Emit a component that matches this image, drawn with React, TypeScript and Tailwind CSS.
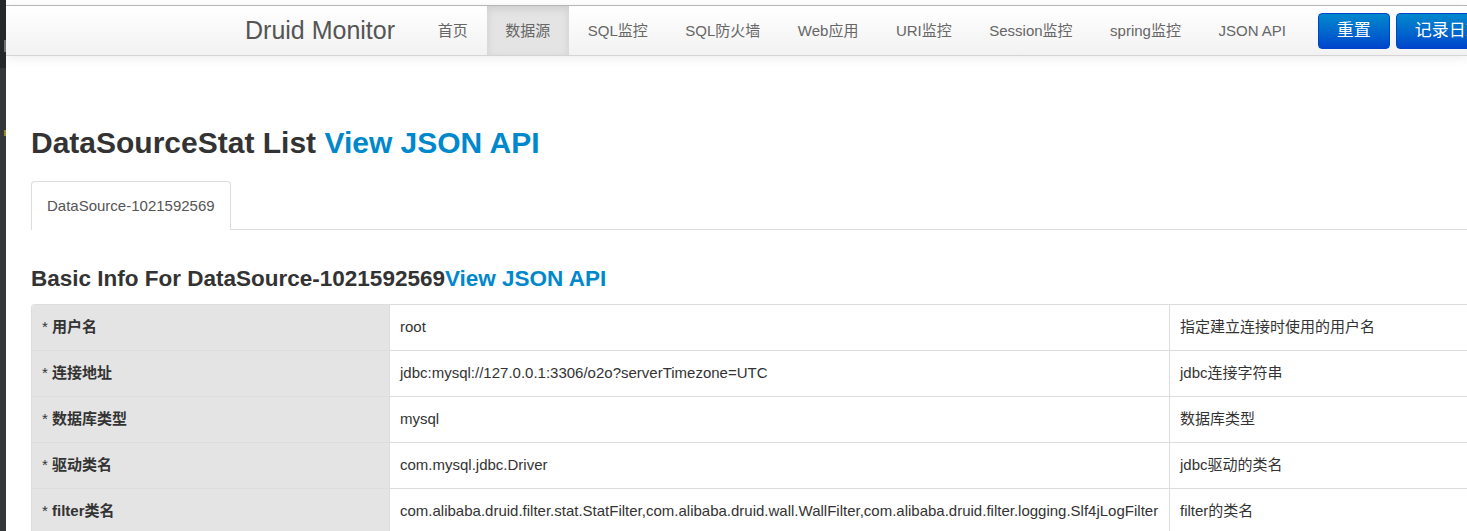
import React from "react";

const font = { fontFamily: '"Liberation Sans", Arial, "Noto Sans CJK SC", sans-serif' };

const navItems = ["首页", "数据源", "SQL监控", "SQL防火墙", "Web应用", "URI监控", "Session监控", "spring监控", "JSON API"];

const rows = [
  { label: "用户名", value: "root", desc: "指定建立连接时使用的用户名" },
  { label: "连接地址", value: "jdbc:mysql://127.0.0.1:3306/o2o?serverTimezone=UTC", desc: "jdbc连接字符串" },
  { label: "数据库类型", value: "mysql", desc: "数据库类型" },
  { label: "驱动类名", value: "com.mysql.jdbc.Driver", desc: "jdbc驱动的类名" },
  {
    label: "filter类名",
    value:
      "com.alibaba.druid.filter.stat.StatFilter,com.alibaba.druid.wall.WallFilter,com.alibaba.druid.filter.logging.Slf4jLogFilter",
    desc: "filter的类名",
  },
];

function NavBar() {
  return (
    <div className="relative z-10">
      <div className="h-[5px] bg-white" />
      <div className="flex h-[51px] items-stretch whitespace-nowrap border-t border-b border-t-[#b5b5b5] border-b-[#d4d4d4] bg-gradient-to-b from-white to-[#f2f2f2] shadow-[0_2px_10px_rgba(0,0,0,0.08)]">
        <div className="ml-[239px] flex w-[174px] shrink-0 items-center text-[25px] text-[#555]">Druid Monitor</div>
        {navItems.map((item) => (
          <div
            key={item}
            className={
              item === "数据源"
                ? "flex shrink-0 items-center bg-[#e4e4e4] px-[18.75px] pt-[2px] text-[15px] text-[#666] shadow-[inset_0_3px_8px_rgba(0,0,0,0.1)]"
                : "flex shrink-0 items-center px-[18.75px] pt-[2px] text-[15px] text-[#666]"
            }
          >
            {item}
          </div>
        ))}
        <div className="ml-[13px] flex shrink-0 items-center gap-[6px]">
          <button className="h-[36px] shrink-0 rounded-[4px] border border-[#0044cc] bg-gradient-to-b from-[#0088cc] to-[#0044cc] px-[18px] text-[17px] text-white">
            重置
          </button>
          <button className="h-[36px] shrink-0 rounded-[4px] border border-[#0044cc] bg-gradient-to-b from-[#0088cc] to-[#0044cc] px-[18px] text-[17px] text-white">
            记录日志并重置
          </button>
        </div>
      </div>
    </div>
  );
}

export default function App() {
  return (
    <div className="flex h-[531px] w-[1467px] overflow-hidden bg-white" style={font}>
      <div className="flex w-[6px] shrink-0 flex-col">
        <div className="relative h-[68px] bg-[#25272a]">
          <div className="absolute left-[4px] top-[40px] h-[12px] w-[2px] bg-[#6c7074]" />
        </div>
        <div className="relative flex-1 bg-[#33373a]">
          <div className="absolute left-[4px] top-[62px] h-[6px] w-[2px] bg-[#9a8a2a]" />
        </div>
      </div>

      <div className="min-w-0 flex-1 overflow-hidden">
        <NavBar />

        <div className="pl-[25px] pt-[67px]">
          <h1 className="whitespace-nowrap text-[30px] font-bold leading-[40px] text-[#333]">
            DataSourceStat List <span className="text-[#0088cc]">View JSON API</span>
          </h1>

          <div className="mt-[18px] flex h-[49px] border-b border-[#ddd]">
            <div className="-mb-px flex h-[49px] items-center rounded-t-[4px] border border-b-0 border-[#ddd] bg-white px-[15px] text-[15px] text-[#555]">
              DataSource-1021592569
            </div>
          </div>

          <h3 className="mt-[34px] whitespace-nowrap text-[22.5px] font-bold leading-[30px] text-[#333]">
            Basic Info For DataSource-1021592569<span className="text-[#0088cc]">View JSON API</span>
          </h3>

          <table className="mt-[10px] w-[1600px] border-separate border-spacing-0 rounded-tl-[4px] border-l border-t border-[#ddd] text-[15px] text-[#333]">
            <tbody>
              {rows.map((row, i) => (
                <tr key={row.label} className="h-[46px]">
                  <td
                    className={
                      i === 0
                        ? "w-[358px] rounded-tl-[4px] border-b border-r border-[#ddd] bg-[#e4e4e4] px-[10px]"
                        : "w-[358px] border-b border-r border-[#ddd] bg-[#e4e4e4] px-[10px]"
                    }
                  >
                    * <b>{row.label}</b>
                  </td>
                  <td className="w-[780px] whitespace-nowrap border-b border-r border-[#ddd] px-[10px]">{row.value}</td>
                  <td className="border-b border-[#ddd] px-[10px]">{row.desc}</td>
                </tr>
              ))}
            </tbody>
          </table>
        </div>
      </div>
    </div>
  );
}
